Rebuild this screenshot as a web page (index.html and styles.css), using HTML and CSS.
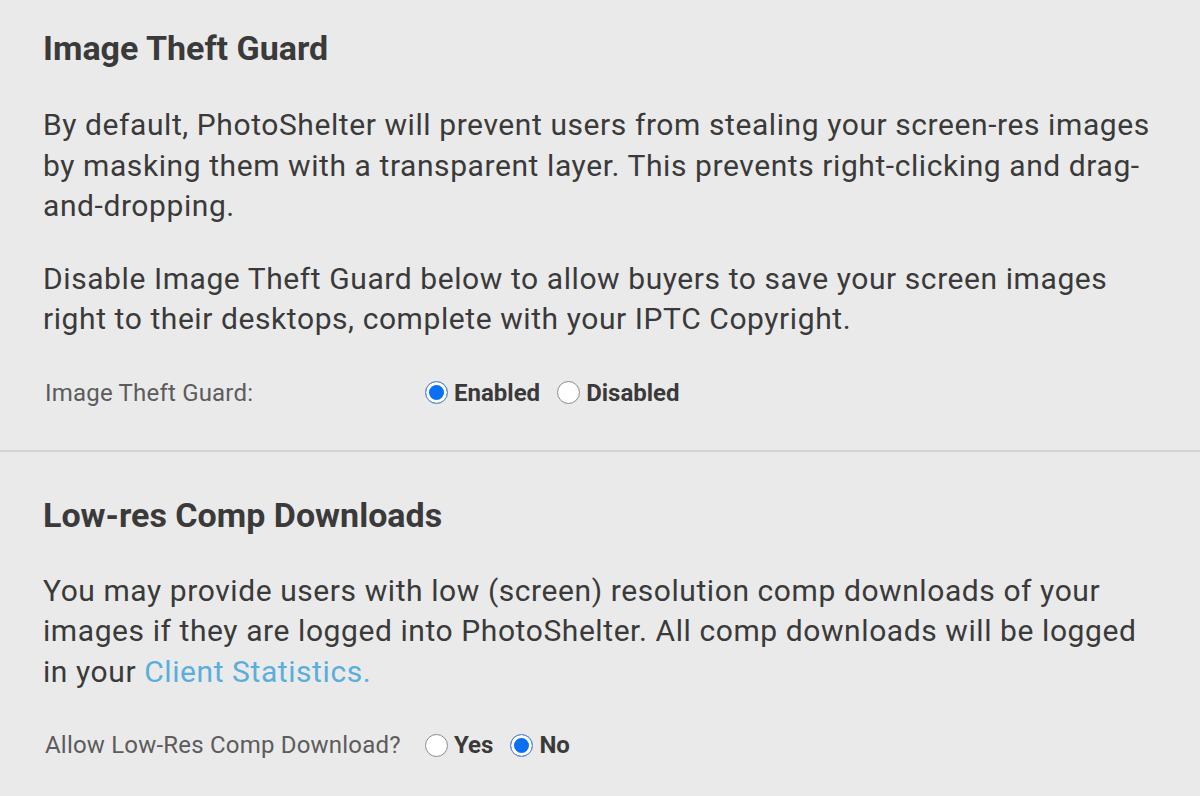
FILE: index.html
```html
<!DOCTYPE html>
<html>
<head>
<meta charset="utf-8">
<link rel="stylesheet" href="styles.css">
</head>
<body>
<section class="panel">
  <h2 class="panel-title">Image Theft Guard</h2>
  <p class="panel-text">By default, PhotoShelter will prevent users from stealing your screen-res images by masking them with a transparent layer. This prevents right-clicking and drag-and-dropping.</p>
  <p class="panel-text">Disable Image Theft Guard below to allow buyers to save your screen images right to their desktops, complete with your IPTC Copyright.</p>
  <div class="field">
    <span class="field-label">Image Theft Guard:</span>
    <div class="options">
      <label class="option"><input type="radio" name="itg" checked><span>Enabled</span></label>
      <label class="option"><input type="radio" name="itg"><span>Disabled</span></label>
    </div>
  </div>
</section>
<section class="panel">
  <h2 class="panel-title">Low-res Comp Downloads</h2>
  <p class="panel-text">You may provide users with low (screen) resolution comp downloads of your images if they are logged into PhotoShelter. All comp downloads will be logged in your <a class="link" href="#">Client Statistics.</a></p>
  <div class="field">
    <span class="field-label">Allow Low-Res Comp Download?</span>
    <div class="options">
      <label class="option"><input type="radio" name="lr"><span>Yes</span></label>
      <label class="option"><input type="radio" name="lr" checked><span>No</span></label>
    </div>
  </div>
</section>
</body>
</html>
```
FILE: styles.css
```css
html, body {
  margin: 0;
  padding: 0;
  background: #eaeaea;
}
body {
  font-family: Roboto, "Liberation Sans", Arial, sans-serif;
  color: #3a3a3a;
}
.panel {
  padding: 28px 42px 43px 43px;
}
.panel + .panel {
  border-top: 2px solid #d2d2d2;
  padding-top: 43px;
}
.panel-title {
  margin: 0 0 37px;
  font-size: 34px;
  line-height: 40px;
  font-weight: 700;
  color: #3a3a3a;
}
.panel + .panel .panel-title {
  margin-bottom: 36px;
}
.panel-text {
  margin: 0 0 32px;
  font-size: 30px;
  line-height: 40.5px;
  letter-spacing: 0.58px;
  color: #3a3a3a;
}
.panel-text + .field {
  margin-top: 39px;
}
.field {
  display: grid;
  grid-template-columns: 380px auto;
  align-items: center;
  height: 28px;
  padding-left: 2px;
}
.field-label {
  font-size: 24px;
  letter-spacing: 0.2px;
  color: #5c5c5c;
}
.options {
  display: flex;
  align-items: center;
  gap: 17px;
}
.option {
  display: flex;
  align-items: center;
  gap: 6px;
  font-size: 24px;
  font-weight: 700;
  color: #3a3a3a;
}
.option input {
  appearance: none;
  -webkit-appearance: none;
  margin: 0;
  width: 23px;
  height: 23px;
  border-radius: 50%;
  border: 1px solid #8c8c8c;
  background: #fff;
}
.option input:checked {
  border: 1px solid #6f8fb8;
  background: #0a6ff0;
  box-shadow: inset 0 0 0 3px #fff;
}
.link {
  color: #5aaedc;
  text-decoration: none;
}
```
